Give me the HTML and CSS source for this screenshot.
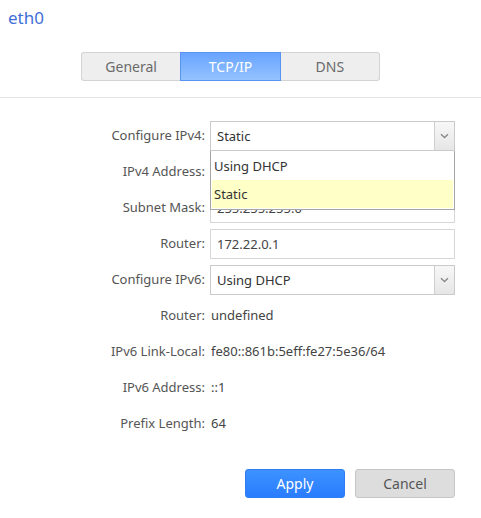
FILE: index.html
```html
<!DOCTYPE html>
<html>
<head>
<meta charset="utf-8">
<link rel="stylesheet" href="styles.css">
</head>
<body>
<div class="title">eth0</div>
<div class="tabs">
  <div class="tab">General</div>
  <div class="tab active">TCP/IP</div>
  <div class="tab">DNS</div>
</div>
<div class="rule"></div>
<div class="form">
  <div class="label">Configure IPv4:</div>
  <div class="field">
    <div class="select"><span class="sel-text">Static</span><span class="arrow"><svg width="9" height="6" viewBox="0 0 9 6"><path d="M1 1.2 L4.5 4.5 L8 1.2" fill="none" stroke="#8a8a8a" stroke-width="1.5"/></svg></span></div>
    <div class="menu">
      <div class="opt">Using DHCP</div>
      <div class="opt hl">Static</div>
    </div>
  </div>
  <div class="label">IPv4 Address:</div>
  <div class="field"><div class="input"></div></div>
  <div class="label">Subnet Mask:</div>
  <div class="field"><div class="input">255.255.255.0</div></div>
  <div class="label">Router:</div>
  <div class="field"><div class="input">172.22.0.1</div></div>
  <div class="label">Configure IPv6:</div>
  <div class="field">
    <div class="select"><span class="sel-text">Using DHCP</span><span class="arrow"><svg width="9" height="6" viewBox="0 0 9 6"><path d="M1 1.2 L4.5 4.5 L8 1.2" fill="none" stroke="#8a8a8a" stroke-width="1.5"/></svg></span></div>
  </div>
  <div class="label">Router:</div>
  <div class="value">undefined</div>
  <div class="label">IPv6 Link-Local:</div>
  <div class="value">fe80::861b:5eff:fe27:5e36/64</div>
  <div class="label">IPv6 Address:</div>
  <div class="value">::1</div>
  <div class="label">Prefix Length:</div>
  <div class="value">64</div>
</div>
<div class="buttons">
  <div class="btn apply">Apply</div>
  <div class="btn cancel">Cancel</div>
</div>
</body>
</html>
```
FILE: styles.css
```css
html, body {
  margin: 0;
  padding: 0;
  background: #ffffff;
}
body {
  font-family: "Noto Sans", "Open Sans", sans-serif;
  font-size: 13px;
  color: #444;
  width: 481px;
}
.title {
  padding: 7px 8px 0;
  font-size: 17px;
  line-height: 21px;
  color: #3f6fd8;
}
.tabs {
  display: flex;
  margin: 24px 0 0 81px;
  width: 299px;
  height: 29px;
}
.tab {
  flex: 1;
  box-sizing: border-box;
  height: 29px;
  line-height: 27px;
  text-align: center;
  font-size: 14px;
  color: #6a6a6a;
  background: #eeeeee;
  border: 1px solid #d3d3d3;
}
.tab:first-child {
  border-radius: 3px 0 0 3px;
  border-right: none;
}
.tab:last-child {
  border-radius: 0 3px 3px 0;
  border-left: none;
}
.tab.active {
  color: #fff;
  background: linear-gradient(#68a4ff, #94c2ff);
  border: 1px solid #5a94f2;
}
.rule {
  margin-top: 16px;
  height: 1px;
  background: #e4e4e4;
}
.form {
  margin-top: 23px;
  display: grid;
  grid-template-columns: 205px 245px;
  grid-auto-rows: 30px;
  column-gap: 5px;
  row-gap: 6px;
}
.label {
  text-align: right;
  line-height: 29px;
  color: #555;
  white-space: nowrap;
}
.value {
  line-height: 29px;
  color: #444;
  padding-left: 1px;
}
.field {
  position: relative;
}
.input {
  box-sizing: border-box;
  height: 30px;
  border: 1px solid #d6d6d6;
  padding-left: 6px;
  line-height: 28px;
  color: #444;
}
.select {
  box-sizing: border-box;
  height: 30px;
  border: 1px solid #cacaca;
  display: flex;
  align-items: stretch;
}
.sel-text {
  flex: 1;
  padding-left: 6px;
  line-height: 28px;
  color: #333;
}
.arrow {
  width: 19px;
  border-left: 1px solid #cfcfcf;
  background: linear-gradient(#f7f7f7, #e6e6e6);
  display: flex;
  align-items: center;
  justify-content: center;
}
.menu {
  position: absolute;
  left: 0;
  top: 30px;
  width: 245px;
  box-sizing: border-box;
  background: #fff;
  border: 1px solid #a5a5a5;
  border-top: none;
  padding: 1px;
  z-index: 5;
}
.opt {
  height: 28px;
  line-height: 28px;
  padding-left: 2px;
  color: #333;
}
.opt.hl {
  background: #ffffc8;
}
.buttons {
  display: flex;
  justify-content: flex-end;
  gap: 10px;
  width: 455px;
  margin-top: 30px;
}
.btn {
  box-sizing: border-box;
  width: 100px;
  height: 29px;
  line-height: 27px;
  text-align: center;
  font-size: 14px;
  border-radius: 3px;
}
.apply {
  color: #fff;
  background: linear-gradient(#3d92ff, #2a7cff);
  border: 1px solid #2d7ef5;
}
.cancel {
  color: #555;
  background: #dddddd;
  border: 1px solid #c6c6c6;
}
```
